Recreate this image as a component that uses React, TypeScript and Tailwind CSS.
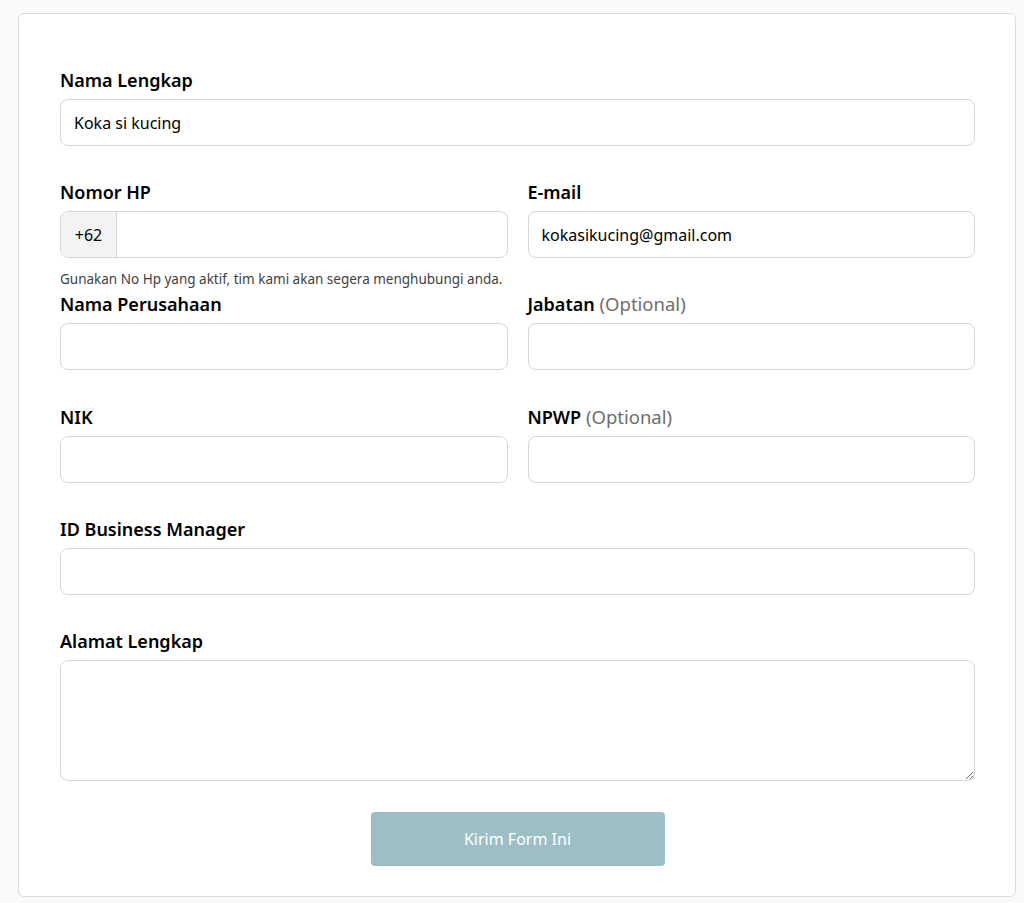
const font = { fontFamily: '"Noto Sans", "Open Sans", sans-serif' };

function Label({ text, optional }: { text: string; optional?: boolean }) {
  return (
    <label className="mb-[7px] block text-[18px] font-semibold leading-[24px] text-black">
      {text}
      {optional && <span className="text-[18.5px] font-normal text-[#6e6e6e]"> (Optional)</span>}
    </label>
  );
}

function Input({ value }: { value?: string }) {
  return (
    <input
      defaultValue={value}
      className="h-[47px] w-full rounded-[8px] border border-[#d6d6d6] bg-white px-[13px] text-[16px] text-black outline-none"
    />
  );
}

function Field({
  label,
  value,
  optional,
  gap = "mb-[34px]",
}: {
  label: string;
  value?: string;
  optional?: boolean;
  gap?: string;
}) {
  return (
    <div className={gap}>
      <Label text={label} optional={optional} />
      <Input value={value} />
    </div>
  );
}

export default function App() {
  return (
    <div className="min-h-[903px] bg-[#fafafa] pt-[13px] pl-[18px] pr-[8px]" style={font}>
      <div className="rounded-[6px] border border-[#dcdcdc] bg-white pl-[41px] pr-[40px] pt-[54px] pb-[30px]">
        <Field label="Nama Lengkap" value="Koka si kucing" />

        <div className="grid grid-cols-2 gap-x-[20px]">
          <div>
            <Label text="Nomor HP" />
            <div className="flex h-[47px] w-full overflow-hidden rounded-[8px] border border-[#d6d6d6] bg-white">
              <span className="flex w-[56px] items-center justify-center border-r border-[#d6d6d6] bg-[#f3f3f3] text-[16px] text-black">
                +62
              </span>
              <input className="min-w-0 flex-1 px-[13px] text-[16px] outline-none" />
            </div>
            <p className="h-[34px] pt-[12px] text-[13.5px] leading-[18px] text-[#3f3f3f]">
              Gunakan No Hp yang aktif, tim kami akan segera menghubungi anda.
            </p>
          </div>
          <Field label="E-mail" value="kokasikucing@gmail.com" />

          <Field label="Nama Perusahaan" gap="mb-[35px]" />
          <Field label="Jabatan" optional gap="mb-[35px]" />

          <Field label="NIK" />
          <Field label="NPWP" optional />
        </div>

        <Field label="ID Business Manager" />

        <div>
          <Label text="Alamat Lengkap" />
          <textarea className="block h-[121px] w-full rounded-[8px] border border-[#d6d6d6] bg-white px-[13px] py-[10px] text-[16px] outline-none" />
        </div>

        <div className="mt-[31px] flex justify-center">
          <button className="h-[54px] w-[294px] rounded-[4px] bg-[#9cbfc5] text-[16px] text-white">
            Kirim Form Ini
          </button>
        </div>
      </div>
    </div>
  );
}
